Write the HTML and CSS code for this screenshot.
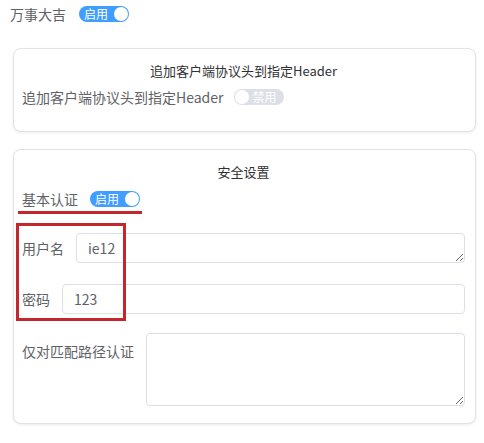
FILE: index.html
```html
<!DOCTYPE html>
<html lang="zh-CN">
<head>
<meta charset="utf-8">
<link rel="stylesheet" href="styles.css">
</head>
<body>
<div class="top-row">
  <span class="label">万事大吉</span>
  <span class="switch on"><span class="switch-text">启用</span><span class="knob"></span></span>
</div>

<div class="card card-header">
  <div class="card-title">追加客户端协议头到指定Header</div>
  <div class="inline-row">
    <span class="label">追加客户端协议头到指定Header</span>
    <span class="switch off"><span class="knob"></span><span class="switch-text">禁用</span></span>
  </div>
</div>

<div class="card card-security">
  <div class="card-title">安全设置</div>
  <div class="inline-row auth-row">
    <span class="label">基本认证</span>
    <span class="switch on"><span class="switch-text">启用</span><span class="knob"></span></span>
    <span class="mark-underline"></span>
  </div>
  <div class="form-area">
    <span class="mark-box"></span>
    <div class="form-row row-user">
      <span class="label">用户名</span>
      <textarea class="field single" rows="1">ie12</textarea>
    </div>
    <div class="form-row row-pass">
      <span class="label">密码</span>
      <input class="field" type="text" value="123">
    </div>
    <div class="form-row row-path">
      <span class="label">仅对匹配路径认证</span>
      <textarea class="field multi"></textarea>
    </div>
  </div>
</div>
</body>
</html>
```

FILE: styles.css
```css
html, body {
  margin: 0;
  padding: 0;
  background: #ffffff;
}
body {
  font-family: "Noto Sans CJK SC", "Noto Sans", sans-serif;
  font-size: 14px;
  color: #606266;
  width: 484px;
  height: 443px;
  overflow: hidden;
}
.label {
  color: #606266;
  font-size: 14px;
  line-height: 20px;
  white-space: nowrap;
}
.top-row {
  display: flex;
  align-items: center;
  height: 20px;
  padding: 4px 0 0 10px;
}
.top-row .switch { margin-left: 13px; }

.switch {
  position: relative;
  display: inline-flex;
  align-items: center;
  box-sizing: border-box;
  width: 50px;
  height: 16px;
  border-radius: 8px;
  padding: 0 1px;
}
.switch.on { background: #409eff; justify-content: space-between; }
.switch.off { background: #dcdfe6; justify-content: space-between; }
.switch-text {
  color: #ffffff;
  font-size: 12px;
  line-height: 16px;
  padding: 0 3px 0 4px;
}
.switch.off .switch-text { padding: 0 7px 0 0; }
.knob {
  width: 14px;
  height: 14px;
  border-radius: 50%;
  background: #ffffff;
}

.card {
  box-sizing: border-box;
  width: 463px;
  margin-left: 13px;
  border: 1px solid #e1e3e8;
  border-radius: 8px;
  box-shadow: 0 1px 3px rgba(0, 0, 0, 0.08);
  padding: 0 10px 0 8px;
  background: #fff;
}
.card-header {
  margin-top: 24px;
  padding-top: 12px;
  padding-bottom: 24px;
}
.card-security {
  margin-top: 17px;
  padding-top: 12px;
  padding-bottom: 17px;
  height: 275px;
}
.card-title {
  text-align: center;
  color: #303133;
  font-size: 13px;
  line-height: 20px;
}
.inline-row {
  display: flex;
  align-items: center;
  height: 20px;
  margin-top: 6px;
}
.inline-row .switch { margin-left: 12px; }
.card-header .inline-row .switch { margin-left: 11px; }

.auth-row {
  position: relative;
  margin-top: 7px;
}
.mark-underline {
  position: absolute;
  left: -4px;
  top: 22px;
  width: 124px;
  height: 3px;
  background: #c4262e;
}

.form-area {
  position: relative;
  margin-top: 24px;
}
.mark-box {
  position: absolute;
  left: -6px;
  top: -10px;
  width: 110px;
  height: 98px;
  box-sizing: border-box;
  border: 3px solid #c4262e;
  pointer-events: none;
  z-index: 2;
}
.form-row {
  display: flex;
  align-items: center;
}
.form-row .label { margin-right: 12px; }
.row-pass { margin-top: 21px; }
.row-path { margin-top: 19px; align-items: flex-start; }
.row-path .label { margin-top: 8px; }

.field {
  flex: 1;
  box-sizing: border-box;
  border: 1px solid #dcdfe6;
  border-radius: 4px;
  font-family: "Noto Sans CJK SC", "Noto Sans", sans-serif;
  font-size: 14px;
  color: #606266;
  background: #fff;
  padding: 4px 11px;
  line-height: 20px;
  margin: 0;
  outline: none;
  min-width: 0;
}
input.field { height: 30px; }
.field.single { height: 30px; resize: vertical; overflow: hidden; }
.field.multi { height: 73px; resize: vertical; }
```
